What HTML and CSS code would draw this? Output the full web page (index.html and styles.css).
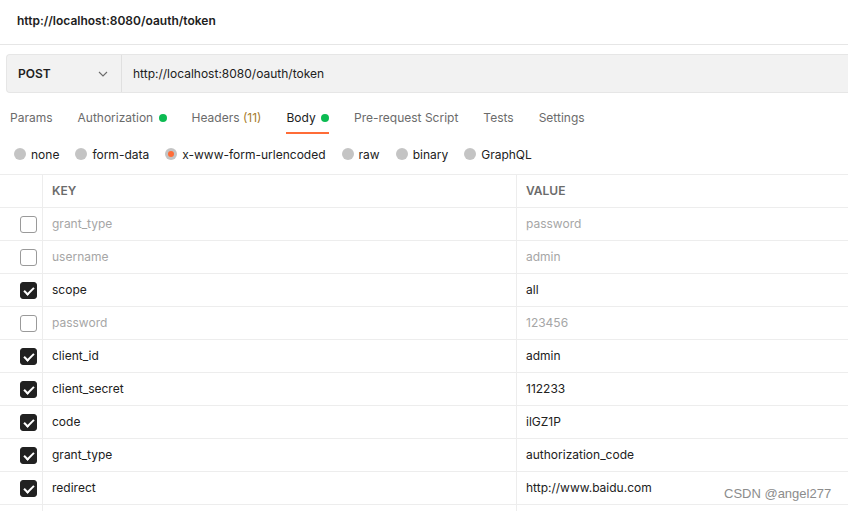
FILE: index.html
```html
<!DOCTYPE html>
<html lang="en">
<head>
    <meta charset="UTF-8">
    <meta name="viewport" content="width=device-width, initial-scale=1.0">
    <title>Postman</title>
    <link rel="stylesheet" href="styles.css">
</head>
<body>
    <div class="req_title">http://localhost:8080/oauth/token</div>

    <div class="req_bar">
        <div class="method">
            <span>POST</span>
            <svg width="10" height="6" viewBox="0 0 10 6"><path d="M1 1l4 4 4-4" fill="none" stroke="#6b6b6b" stroke-width="1.1"/></svg>
        </div>
        <div class="url">http://localhost:8080/oauth/token</div>
    </div>

    <ul class="tabs">
        <li>Params</li>
        <li>Authorization <i class="dot"></i></li>
        <li>Headers <span class="count">(11)</span></li>
        <li class="on">Body <i class="dot"></i></li>
        <li>Pre-request Script</li>
        <li>Tests</li>
        <li>Settings</li>
    </ul>

    <ul class="body_types">
        <li><i class="radio"></i>none</li>
        <li><i class="radio"></i>form-data</li>
        <li><i class="radio checked"></i>x-www-form-urlencoded</li>
        <li><i class="radio"></i>raw</li>
        <li><i class="radio"></i>binary</li>
        <li><i class="radio"></i>GraphQL</li>
    </ul>

    <div class="kv_wrap">
        <div class="kv_table">
            <div class="row head">
                <div class="cell check"></div>
                <div class="cell">KEY</div>
                <div class="cell">VALUE</div>
            </div>
            <div class="row off">
                <div class="cell check"><i class="box"></i></div>
                <div class="cell">grant_type</div>
                <div class="cell">password</div>
            </div>
            <div class="row off">
                <div class="cell check"><i class="box"></i></div>
                <div class="cell">username</div>
                <div class="cell">admin</div>
            </div>
            <div class="row">
                <div class="cell check"><i class="box checked"></i></div>
                <div class="cell">scope</div>
                <div class="cell">all</div>
            </div>
            <div class="row off">
                <div class="cell check"><i class="box"></i></div>
                <div class="cell">password</div>
                <div class="cell">123456</div>
            </div>
            <div class="row">
                <div class="cell check"><i class="box checked"></i></div>
                <div class="cell">client_id</div>
                <div class="cell">admin</div>
            </div>
            <div class="row">
                <div class="cell check"><i class="box checked"></i></div>
                <div class="cell">client_secret</div>
                <div class="cell">112233</div>
            </div>
            <div class="row">
                <div class="cell check"><i class="box checked"></i></div>
                <div class="cell">code</div>
                <div class="cell">ilGZ1P</div>
            </div>
            <div class="row">
                <div class="cell check"><i class="box checked"></i></div>
                <div class="cell">grant_type</div>
                <div class="cell">authorization_code</div>
            </div>
            <div class="row">
                <div class="cell check"><i class="box checked"></i></div>
                <div class="cell">redirect</div>
                <div class="cell">http://www.baidu.com</div>
            </div>
            <div class="row">
                <div class="cell check"></div>
                <div class="cell"></div>
                <div class="cell"></div>
            </div>
        </div>
    </div>

    <div class="watermark">CSDN @angel277</div>
</body>
</html>
```

FILE: styles.css
```css
* { margin: 0; padding: 0; box-sizing: border-box; }
li { list-style: none; }
html, body { height: 100%; overflow: hidden; }
body {
    display: flex;
    flex-direction: column;
    font-family: Inter, "Noto Sans", sans-serif;
    font-size: 12px;
    color: #212121;
    background: #fff;
    position: relative;
}

.req_title {
    flex: none;
    height: 45px;
    padding: 14px 0 0 17px;
    line-height: 14px;
    font-weight: 600;
    border-bottom: 1px solid #e6e6e6;
}

.req_bar {
    flex: none;
    display: flex;
    height: 39px;
    margin: 9px 0 0 6px;
    background: #f2f2f2;
    border: 1px solid #e6e6e6;
    border-right: 0;
    border-radius: 4px 0 0 4px;
}
.req_bar .method {
    width: 115px;
    display: flex;
    align-items: center;
    justify-content: space-between;
    padding: 0 13px 0 11px;
    border-right: 1px solid #e0e0e0;
    font-weight: 600;
}
.req_bar .url {
    display: flex;
    align-items: center;
    padding-left: 11px;
    color: #212121;
}

.tabs {
    flex: none;
    display: flex;
    gap: 25px;
    height: 41px;
    padding: 17px 0 0 10px;
    color: #6b6b6b;
}
.tabs li {
    height: 24px;
    line-height: 15px;
    white-space: nowrap;
}
.tabs li.on {
    color: #212121;
    border-bottom: 2px solid #ff6c37;
}
.tabs .count { color: #a87c2c; }
.tabs .dot {
    display: inline-block;
    width: 8px;
    height: 8px;
    margin-left: 2px;
    border-radius: 50%;
    background: #0cbb52;
    vertical-align: 0;
}

.body_types {
    flex: none;
    display: flex;
    gap: 16px;
    height: 40px;
    padding: 12px 0 0 14px;
    color: #212121;
}
.body_types li {
    display: flex;
    align-items: center;
    gap: 5px;
    height: 16px;
}
.radio {
    width: 12px;
    height: 12px;
    border-radius: 50%;
    background: #c4c4c4;
    position: relative;
}
.radio.checked::after {
    content: "";
    position: absolute;
    left: 3px;
    top: 3px;
    width: 6px;
    height: 6px;
    border-radius: 50%;
    background: #ff6c37;
}

.kv_wrap {
    flex: 1;
    min-height: 0;
    overflow: hidden;
}
.kv_table { border-top: 1px solid #ededed; }
.kv_table .row {
    display: grid;
    grid-template-columns: 43px 474px 1fr;
    height: 33px;
    border-bottom: 1px solid #ededed;
}
.kv_table .cell {
    display: flex;
    align-items: center;
    padding: 0 0 2px 9px;
    border-right: 1px solid #ededed;
    color: #212121;
}
.kv_table .cell:last-child { border-right: 0; }
.kv_table .cell.check { padding: 0 0 0 20px; }
.kv_table .head .cell {
    font-weight: 600;
    color: #6b6b6b;
}
.kv_table .off .cell { color: #a6a6a6; }

.box {
    width: 17px;
    height: 17px;
    border: 1px solid #9a9a9a;
    border-radius: 3px;
    background: #fff;
    position: relative;
}
.box.checked {
    background: #212121;
    border-color: #212121;
}
.box.checked::after {
    content: "";
    position: absolute;
    left: 5px;
    top: 2px;
    width: 4px;
    height: 8px;
    border: solid #fff;
    border-width: 0 2.5px 2.5px 0;
    transform: rotate(45deg);
}

.watermark {
    position: absolute;
    left: 724px;
    top: 486px;
    font-family: "Liberation Sans", sans-serif;
    font-size: 13px;
    color: #8c8c8c;
}
```
